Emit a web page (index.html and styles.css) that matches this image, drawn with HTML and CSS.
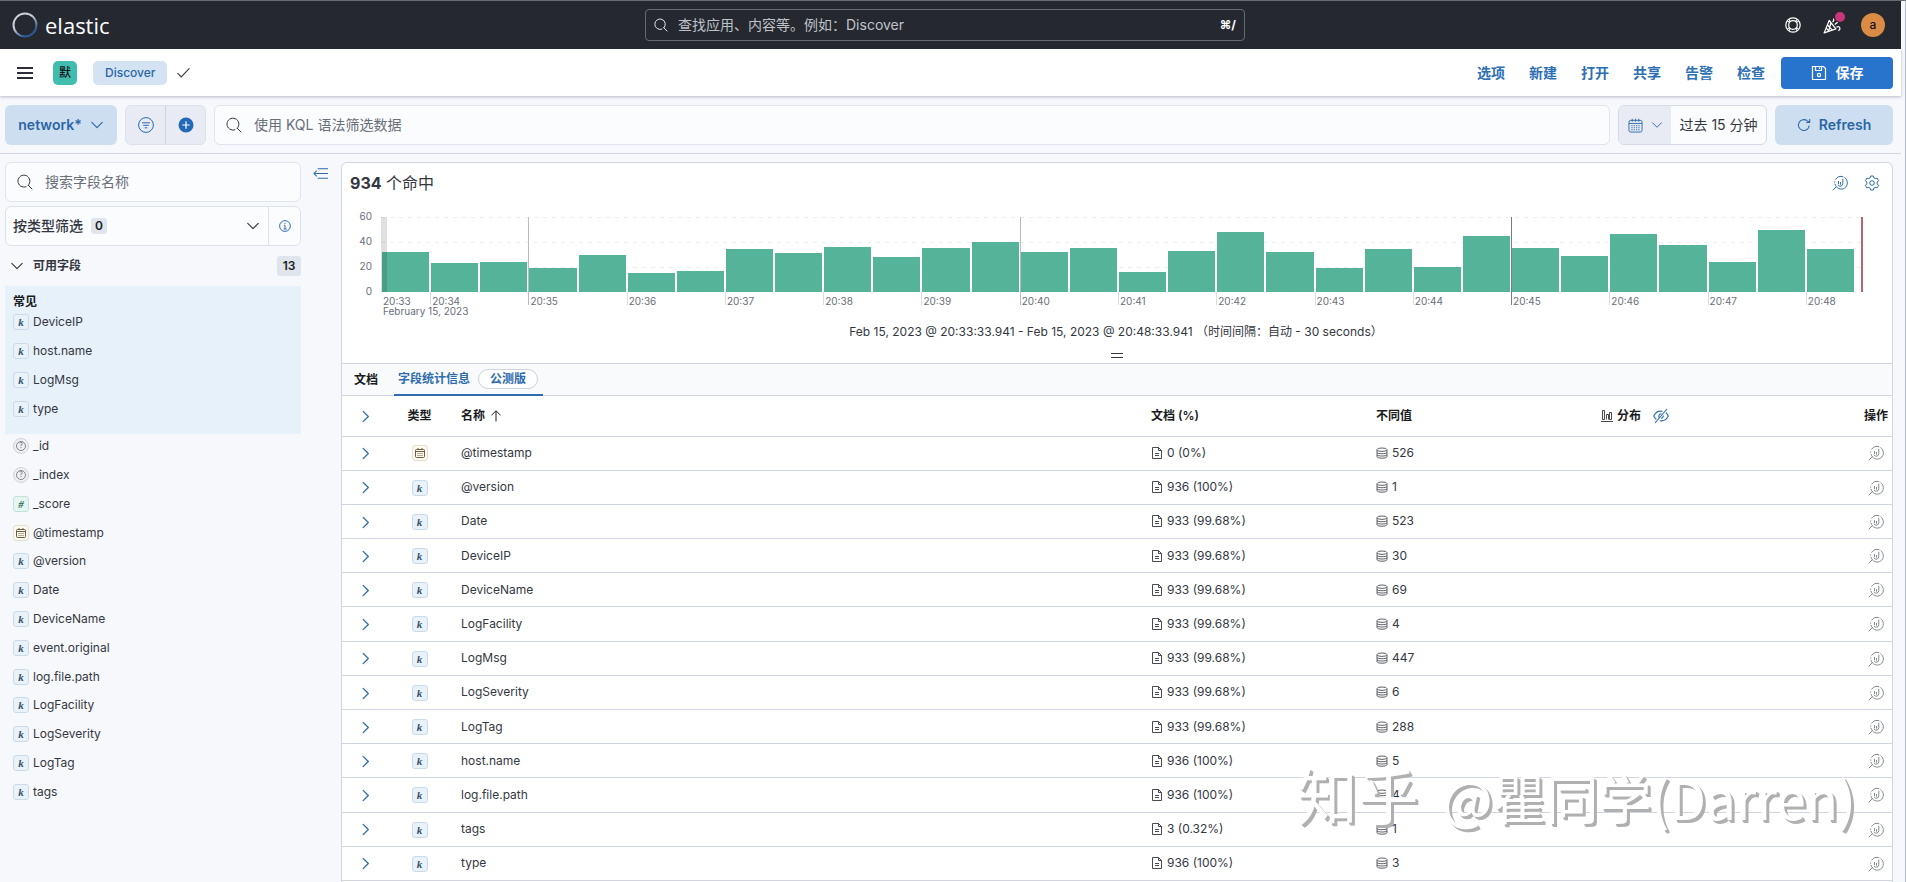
FILE: index.html
```html
<!DOCTYPE html>
<html lang="zh-CN">
<head>
<meta charset="utf-8">
<title>Discover - Elastic</title>
<link rel="stylesheet" href="styles.css">
</head>
<body>
<svg class="sprite" aria-hidden="true">
  <symbol id="search" viewBox="0 0 16 16"><path d="M11.3 11.3A6 6 0 1 0 9 12.8M11.2 11.2L15 15" fill="none" stroke="currentColor" stroke-linecap="round"/></symbol>
  <symbol id="down" viewBox="0 0 16 16"><path d="M2 5l6 6 6-6" fill="none" stroke="currentColor" stroke-width="1.300" stroke-linecap="round" stroke-linejoin="round"/></symbol>
  <symbol id="right" viewBox="0 0 16 16"><path d="M5.500 2.500L11 8l-5.500 5.500" fill="none" stroke="currentColor" stroke-width="1.400" stroke-linecap="round" stroke-linejoin="round"/></symbol>
  <symbol id="check" viewBox="0 0 16 16"><path d="M2 8.500L6 12.500 15 3" fill="none" stroke="currentColor" stroke-width="1.200" stroke-linecap="round"/></symbol>
  <symbol id="calendar" viewBox="0 0 16 16"><g fill="none" stroke="currentColor"><rect x="1" y="2.500" width="14" height="12.500" rx="2"/><path d="M1 5.800h14M4.500 .8v3.200M8 .8v3.200M11.500 .8v3.200"/><path d="M3.500 8.200h9.500M3.500 10.400h9.500M3.500 12.600h9.500" stroke-dasharray="1.400 1.100"/></g></symbol>
  <symbol id="calendar-small" viewBox="0 0 10 10"><g fill="none" stroke="currentColor"><rect x=".5" y="1.500" width="9" height="8" rx="1"/><path d="M0 3.500h10M3 0v2M7 0v2"/><path d="M2.500 5.500h5M2.500 7.500h5" stroke-dasharray="1 1"/></g></symbol>
  <symbol id="lens" viewBox="0 0 16 16"><g fill="none" stroke="currentColor" stroke-linecap="round"><path d="M3.700 4.200A6.300 6.300 0 0 1 11 1.700M12.800 2.700A6.300 6.300 0 1 1 3 9.200M2.700 7.300V6.800M4.400 11.600L1 15"/><path d="M6.500 6.500v2.200M8.500 7.500v1.800M10.800 4.200v4.300A2.600 2.600 0 0 1 6 10"/></g></symbol>
  <symbol id="doc" viewBox="0 0 12 12"><path d="M1.500 .5h6l3 3v8h-9zM7.500 .5v3h3M4 6.500h4M4 8.500h4" fill="none" stroke="currentColor" stroke-width=".9"/></symbol>
  <symbol id="database" viewBox="0 0 12 12"><g fill="none" stroke="currentColor" stroke-width=".8"><path d="M1 3V9.500c0 1 2 1.700 5 1.700s5-.7 5-1.700V3M1 5.500c.5.900 2.500 1.200 5 1.200s4.500-.3 5-1.200M1 7.800c.5.900 2.500 1.200 5 1.200s4.500-.3 5-1.200"/><ellipse cx="6" cy="2.700" rx="5" ry="1.700"/></g></symbol>
</svg>

<header class="topbar">
  <a class="brand" href="#">
    <svg class="brand-ring" viewBox="0 0 26 26" aria-hidden="true"><defs><linearGradient id="ring" x1="0" y1="0" x2=".7" y2="1"><stop offset=".45" stop-color="#c9ced8"/><stop offset=".9" stop-color="#2b5c99"/></linearGradient></defs><circle cx="13" cy="13" r="11.500" fill="none" stroke="url(#ring)" stroke-width="2"/></svg>
    <span>elastic</span>
  </a>
  <label class="global-search">
    <svg class="i14"><use href="#search"/></svg>
    <input type="search" aria-label="全局搜索" placeholder="查找应用、内容等。例如：Discover">
    <kbd>⌘/</kbd>
  </label>
  <div class="top-actions">
    <button class="plain" aria-label="帮助"><svg class="i16" viewBox="0 0 16 16"><g fill="none" stroke="currentColor" stroke-width="1.200"><circle cx="8" cy="8" r="7.200"/><circle cx="8" cy="8" r="4.300"/><path d="M2.500 4.200L5 5.500M4.200 2.500L5.500 5M13.500 4.200L11 5.500M11.800 2.500L10.500 5M2.500 11.800L5 10.500M4.200 13.500L5.500 11M13.500 11.800L11 10.500M11.800 13.500L10.500 11"/></g></svg></button>
    <button class="plain news" aria-label="新闻"><svg class="i18" viewBox="0 0 16 16"><g fill="none" stroke="currentColor" stroke-width="1.100" stroke-linejoin="round"><path d="M5.500 4L1 15l10.500-3.500zM4 8l4.500 4.800M7 6l-2 7.500M3 11l2.500 2.500M9 2.500c1 1 .5 2-.5 2.800M12 10c1.500-1 3-.5 3 1.200s-1 1.500-1.500 1.500M10.500 7.500L13 5.500"/></g></svg><span class="news-dot"></span></button>
    <button class="avatar" aria-label="账户">a</button>
  </div>
</header>

<nav class="appbar">
  <button class="plain dark" aria-label="菜单"><svg class="i16" viewBox="0 0 16 16"><path d="M0 3h16M0 8h16M0 13h16" stroke="currentColor" stroke-width="2"/></svg></button>
  <button class="space">默</button>
  <a class="crumb" href="#">Discover</a>
  <svg class="i14 crumb-check"><use href="#check"/></svg>
  <div class="app-links">
    <a href="#">选项</a><a href="#">新建</a><a href="#">打开</a><a href="#">共享</a><a href="#">告警</a><a href="#">检查</a>
    <button class="save"><svg class="i16" viewBox="0 0 16 16"><path d="M1.500 1.500h11l2 2v11h-13zM4.500 1.500v4h6v-4M8.500 2.500v1.500" fill="none" stroke="currentColor" stroke-width="1.200"/><circle cx="8" cy="10" r="1.600" fill="none" stroke="currentColor" stroke-width="1.200"/></svg>保存</button>
  </div>
</nav>

<section class="querybar">
  <button class="dataview">network*<svg class="i14"><use href="#down"/></svg></button>
  <div class="filter-group">
    <button aria-label="已保存的筛选"><svg class="i16" viewBox="0 0 16 16"><g fill="none" stroke="currentColor"><circle cx="8" cy="8" r="7.400"/><path d="M4 5.800h8M5.200 8.300h5.600M6.700 10.800h2.600"/></g></svg></button>
    <button aria-label="添加筛选"><svg class="i16" viewBox="0 0 16 16"><circle cx="8" cy="8" r="7.500" fill="#2469b8"/><path d="M8 4.300v7.400M4.300 8h7.400" stroke="#fff" stroke-width="1.200"/></svg></button>
  </div>
  <label class="kql"><svg class="i16"><use href="#search"/></svg><input type="text" aria-label="查询" placeholder="使用 KQL 语法筛选数据"></label>
  <div class="date-group">
    <button class="date-quick" aria-label="快速选择日期"><svg class="i15"><use href="#calendar"/></svg><svg class="i12"><use href="#down"/></svg></button>
    <button class="date-range">过去 15 分钟</button>
  </div>
  <button class="refresh"><svg class="i14" viewBox="0 0 16 16"><path d="M14 8.500A6.200 6.200 0 1 1 11.800 3.300L14.200 5M14.500 1v4.200h-4" fill="none" stroke="currentColor" stroke-width="1.200"/></svg>Refresh</button>
</section>

<main class="page">
  <aside class="sidebar">
    <label class="field-search"><svg class="i16"><use href="#search"/></svg><input type="search" aria-label="字段" placeholder="搜索字段名称"></label>
    <div class="type-filter">
      <button class="type-main">按类型筛选<span class="badge">0</span><svg class="i14"><use href="#down"/></svg></button>
      <button class="type-info" aria-label="字段类型说明"><svg class="i12" viewBox="0 0 16 16"><g fill="none" stroke="currentColor" stroke-width="1.300"><circle cx="8" cy="8" r="7.200"/><path d="M6.500 7H8v5M6 12h4.500M8 3.500v1.700"/></g></svg></button>
    </div>
    <button class="available"><svg class="i14"><use href="#down"/></svg>可用字段<span class="badge big">13</span></button>
    <section class="popular">
      <h2>常见</h2>
      <ul class="fields popular-fields">
        <li><span class="tok">k</span>DeviceIP</li>
        <li><span class="tok">k</span>host.name</li>
        <li><span class="tok">k</span>LogMsg</li>
        <li><span class="tok">k</span>type</li>
      </ul>
    </section>
    <ul class="fields all-fields">
      <li><span class="tok unknown"><i>?</i></span>_id</li>
      <li><span class="tok unknown"><i>?</i></span>_index</li>
      <li><span class="tok num">#</span>_score</li>
      <li><span class="tok date"><svg class="i10"><use href="#calendar-small"/></svg></span>@timestamp</li>
      <li><span class="tok">k</span>@version</li>
      <li><span class="tok">k</span>Date</li>
      <li><span class="tok">k</span>DeviceName</li>
      <li><span class="tok">k</span>event.original</li>
      <li><span class="tok">k</span>log.file.path</li>
      <li><span class="tok">k</span>LogFacility</li>
      <li><span class="tok">k</span>LogSeverity</li>
      <li><span class="tok">k</span>LogTag</li>
      <li><span class="tok">k</span>tags</li>
    </ul>
  </aside>
  <button class="plain blue collapse" aria-label="折叠侧边栏"><svg class="i15" viewBox="0 0 16 16"><path d="M5 3h11M1 8h15M5 13h11M4 5L1 8l3 3" fill="none" stroke="currentColor" stroke-width="1.100"/></svg></button>

  <section class="panel">
    <div class="hits">
      <h1><strong>934</strong> 个命中</h1>
      <button class="plain blue" aria-label="在 Lens 中编辑"><svg class="i16"><use href="#lens"/></svg></button>
      <button class="plain blue" aria-label="图表选项"><svg class="i16" viewBox="0 0 16 16"><path d="M6.600 1h2.800l.5 1.900 1.300.7 1.900-.5 1.500 2.500-1.400 1.400v1.900l1.400 1.500-1.500 2.500-1.900-.6-1.300.8-.5 1.900H6.600l-.5-1.900-1.300-.8-1.900.6-1.500-2.500 1.400-1.500V7L1.400 5.600l1.500-2.500 1.900.5 1.300-.7z" fill="none" stroke="currentColor" stroke-linejoin="round"/><circle cx="8" cy="8" r="2.300" fill="none" stroke="currentColor"/></svg></button>
    </div>
    <div class="chart">
      <div class="y-axis"><span>60</span><span>40</span><span>20</span><span>0</span></div>
      <div class="plot">
        <div class="bars">
          <b style="height:53.3%"></b><b style="height:38.3%"></b><b style="height:40%"></b><b style="height:31.7%"></b><b style="height:50%"></b><b style="height:25%"></b><b style="height:28.3%"></b><b style="height:56.7%"></b><b style="height:51.7%"></b><b style="height:60%"></b><b style="height:46.7%"></b><b style="height:58.3%"></b><b style="height:66.7%"></b><b style="height:53.3%"></b><b style="height:58.3%"></b><b style="height:26.7%"></b><b style="height:55%"></b><b style="height:80%"></b><b style="height:53.3%"></b><b style="height:31.7%"></b><b style="height:56.7%"></b><b style="height:33.3%"></b><b style="height:75%"></b><b style="height:58.3%"></b><b style="height:48.3%"></b><b style="height:76.7%"></b><b style="height:63.3%"></b><b style="height:40%"></b><b style="height:83.3%"></b><b style="height:56.7%"></b>
        </div>
        <div class="x-axis">
          <span class="first">20:33<br>February 15, 2023</span><span>20:34</span><span class="major">20:35</span><span>20:36</span><span>20:37</span><span>20:38</span><span>20:39</span><span class="major">20:40</span><span>20:41</span><span>20:42</span><span>20:43</span><span>20:44</span><span class="major strong">20:45</span><span>20:46</span><span>20:47</span><span class="last">20:48</span>
        </div>
      </div>
    </div>
    <p class="caption">Feb 15, 2023 @ 20:33:33.941 - Feb 15, 2023 @ 20:48:33.941 （时间间隔：自动 - 30 seconds）</p>
    <button class="resizer" aria-label="调整大小"></button>
    <div class="tabs" role="tablist">
      <button role="tab" aria-selected="false">文档</button>
      <button role="tab" aria-selected="true" class="active">字段统计信息<span class="beta">公测版</span></button>
    </div>
    <table class="stats">
      <colgroup><col class="c-open"><col class="c-type"><col class="c-name"><col class="c-docs"><col class="c-distinct"><col class="c-dist"><col class="c-act"></colgroup>
      <thead><tr>
        <th><button class="plain blue" aria-label="全部展开"><svg class="i15"><use href="#right"/></svg></button></th>
        <th class="mid">类型</th>
        <th>名称 <svg class="i12 sort" viewBox="0 0 12 12"><path d="M6 11.500V1M1.500 5.200L6 .8l4.500 4.400" fill="none" stroke="currentColor"/></svg></th>
        <th>文档 (%)</th>
        <th>不同值</th>
        <th><div class="dist"><svg class="i12" viewBox="0 0 12 12"><path d="M0 11.500h12M1.500 9.500v-9h2v9zM5.500 9.500v-5h2v5M8.500 9.500v-7h2v7z" fill="none" stroke="currentColor" stroke-width=".8"/></svg>分布<button class="plain blue" aria-label="隐藏分布"><svg class="i16" viewBox="0 0 16 16"><g fill="none" stroke="currentColor" stroke-width="1.100"><path d="M9.500 3.300C5.500 2.500 2.300 4.700.7 8c.7 1.400 1.600 2.500 2.700 3.300M12.800 4.800C13.900 5.600 14.700 6.700 15.300 8c-1.600 3.300-4.800 5.300-8.500 4.700M14 1L2 15M6 9.500C5.300 7.500 6.500 5.700 8.500 5.700M10.300 7.500c.2 1.500-.8 2.700-2.300 2.800"/></g></svg></button></div></th>
        <th class="end">操作</th>
      </tr></thead>
      <tbody>
        <tr><td><button class="plain blue" aria-label="展开"><svg class="i15"><use href="#right"/></svg></button></td><td class="mid"><span class="tok date"><svg class="i10"><use href="#calendar-small"/></svg></span></td><td>@timestamp</td><td><svg class="i12"><use href="#doc"/></svg>0 (0%)</td><td><svg class="i12"><use href="#database"/></svg>526</td><td></td><td class="end"><button class="plain grey" aria-label="浏览"><svg class="i16"><use href="#lens"/></svg></button></td></tr>
        <tr><td><button class="plain blue" aria-label="展开"><svg class="i15"><use href="#right"/></svg></button></td><td class="mid"><span class="tok">k</span></td><td>@version</td><td><svg class="i12"><use href="#doc"/></svg>936 (100%)</td><td><svg class="i12"><use href="#database"/></svg>1</td><td></td><td class="end"><button class="plain grey" aria-label="浏览"><svg class="i16"><use href="#lens"/></svg></button></td></tr>
        <tr><td><button class="plain blue" aria-label="展开"><svg class="i15"><use href="#right"/></svg></button></td><td class="mid"><span class="tok">k</span></td><td>Date</td><td><svg class="i12"><use href="#doc"/></svg>933 (99.68%)</td><td><svg class="i12"><use href="#database"/></svg>523</td><td></td><td class="end"><button class="plain grey" aria-label="浏览"><svg class="i16"><use href="#lens"/></svg></button></td></tr>
        <tr><td><button class="plain blue" aria-label="展开"><svg class="i15"><use href="#right"/></svg></button></td><td class="mid"><span class="tok">k</span></td><td>DeviceIP</td><td><svg class="i12"><use href="#doc"/></svg>933 (99.68%)</td><td><svg class="i12"><use href="#database"/></svg>30</td><td></td><td class="end"><button class="plain grey" aria-label="浏览"><svg class="i16"><use href="#lens"/></svg></button></td></tr>
        <tr><td><button class="plain blue" aria-label="展开"><svg class="i15"><use href="#right"/></svg></button></td><td class="mid"><span class="tok">k</span></td><td>DeviceName</td><td><svg class="i12"><use href="#doc"/></svg>933 (99.68%)</td><td><svg class="i12"><use href="#database"/></svg>69</td><td></td><td class="end"><button class="plain grey" aria-label="浏览"><svg class="i16"><use href="#lens"/></svg></button></td></tr>
        <tr><td><button class="plain blue" aria-label="展开"><svg class="i15"><use href="#right"/></svg></button></td><td class="mid"><span class="tok">k</span></td><td>LogFacility</td><td><svg class="i12"><use href="#doc"/></svg>933 (99.68%)</td><td><svg class="i12"><use href="#database"/></svg>4</td><td></td><td class="end"><button class="plain grey" aria-label="浏览"><svg class="i16"><use href="#lens"/></svg></button></td></tr>
        <tr><td><button class="plain blue" aria-label="展开"><svg class="i15"><use href="#right"/></svg></button></td><td class="mid"><span class="tok">k</span></td><td>LogMsg</td><td><svg class="i12"><use href="#doc"/></svg>933 (99.68%)</td><td><svg class="i12"><use href="#database"/></svg>447</td><td></td><td class="end"><button class="plain grey" aria-label="浏览"><svg class="i16"><use href="#lens"/></svg></button></td></tr>
        <tr><td><button class="plain blue" aria-label="展开"><svg class="i15"><use href="#right"/></svg></button></td><td class="mid"><span class="tok">k</span></td><td>LogSeverity</td><td><svg class="i12"><use href="#doc"/></svg>933 (99.68%)</td><td><svg class="i12"><use href="#database"/></svg>6</td><td></td><td class="end"><button class="plain grey" aria-label="浏览"><svg class="i16"><use href="#lens"/></svg></button></td></tr>
        <tr><td><button class="plain blue" aria-label="展开"><svg class="i15"><use href="#right"/></svg></button></td><td class="mid"><span class="tok">k</span></td><td>LogTag</td><td><svg class="i12"><use href="#doc"/></svg>933 (99.68%)</td><td><svg class="i12"><use href="#database"/></svg>288</td><td></td><td class="end"><button class="plain grey" aria-label="浏览"><svg class="i16"><use href="#lens"/></svg></button></td></tr>
        <tr><td><button class="plain blue" aria-label="展开"><svg class="i15"><use href="#right"/></svg></button></td><td class="mid"><span class="tok">k</span></td><td>host.name</td><td><svg class="i12"><use href="#doc"/></svg>936 (100%)</td><td><svg class="i12"><use href="#database"/></svg>5</td><td></td><td class="end"><button class="plain grey" aria-label="浏览"><svg class="i16"><use href="#lens"/></svg></button></td></tr>
        <tr><td><button class="plain blue" aria-label="展开"><svg class="i15"><use href="#right"/></svg></button></td><td class="mid"><span class="tok">k</span></td><td>log.file.path</td><td><svg class="i12"><use href="#doc"/></svg>936 (100%)</td><td><svg class="i12"><use href="#database"/></svg>4</td><td></td><td class="end"><button class="plain grey" aria-label="浏览"><svg class="i16"><use href="#lens"/></svg></button></td></tr>
        <tr><td><button class="plain blue" aria-label="展开"><svg class="i15"><use href="#right"/></svg></button></td><td class="mid"><span class="tok">k</span></td><td>tags</td><td><svg class="i12"><use href="#doc"/></svg>3 (0.32%)</td><td><svg class="i12"><use href="#database"/></svg>1</td><td></td><td class="end"><button class="plain grey" aria-label="浏览"><svg class="i16"><use href="#lens"/></svg></button></td></tr>
        <tr><td><button class="plain blue" aria-label="展开"><svg class="i15"><use href="#right"/></svg></button></td><td class="mid"><span class="tok">k</span></td><td>type</td><td><svg class="i12"><use href="#doc"/></svg>936 (100%)</td><td><svg class="i12"><use href="#database"/></svg>3</td><td></td><td class="end"><button class="plain grey" aria-label="浏览"><svg class="i16"><use href="#lens"/></svg></button></td></tr>
      </tbody>
    </table>
  </section>
</main>
<div class="watermark"><span>知乎</span> @瞿同学(Darren)</div>
</body>
</html>
```
FILE: styles.css
```css
*, *::before, *::after { box-sizing: border-box; }
html { background: #f7f8fc; }
body {
  margin: 0;
  padding-right: 4px;
  border-right: 1px solid #b4b9c9;
  border-top: 1px solid #666b74;
  display: flex;
  flex-direction: column;
  font: 12px/16px Inter, "Noto Sans CJK SC", sans-serif;
  color: #343741;
  background: #f7f8fc;
  overflow: hidden;
  height: 100vh;
}
button, input { font: inherit; color: inherit; margin: 0; }
button { background: none; border: 0; padding: 0; }
a { text-decoration: none; color: inherit; }
ul, h1, h2, p { margin: 0; padding: 0; list-style: none; font-weight: 400; }
svg { flex: none; display: block; }
.sprite { display: none; }
.i10 { width: 10px; height: 10px; }
.i12 { width: 12px; height: 12px; }
.i14 { width: 14px; height: 14px; }
.i15 { width: 15px; height: 15px; }
.i16 { width: 16px; height: 16px; }
.i18 { width: 18px; height: 18px; }
.plain { display: inline-flex; align-items: center; justify-content: center; }
.blue { color: #2e6cad; }
.grey { color: #85898f; }
.dark { color: #2b2e38; }

/* top bar */
.topbar {
  display: grid;
  grid-template-columns: 1fr 600px 1fr;
  align-items: center;
  height: 48px;
  padding: 0 16px 0 5px;
  background: #25282f;
  color: #fff;
}
.brand { display: flex; align-items: center; gap: 7px; padding-left: 7px; font: 22px/26px "Open Sans", sans-serif; }
.brand-ring { width: 26px; height: 26px; }
.global-search {
  display: flex;
  align-items: center;
  gap: 10px;
  height: 32px;
  padding: 0 8px;
  border: 1px solid #666a73;
  border-radius: 4px;
}
input { flex: 1; min-width: 0; border: 0; outline: 0; padding: 0; background: none; }
.global-search input { font-size: 14px; }
.global-search input::placeholder { color: #bfc2c9; opacity: 1; }
kbd { font: 700 12px/16px Inter, "DejaVu Sans", sans-serif; }
.top-actions { display: flex; align-items: center; justify-content: flex-end; gap: 22px; }
.top-actions .avatar {
  width: 24px; height: 24px; margin-left: -2px;
  border-radius: 50%;
  background: #da8b45;
  color: #111;
  font-weight: 500;
}
.news { position: relative; }
.news-dot { position: absolute; top: -4px; right: -4px; width: 10px; height: 10px; border-radius: 50%; background: #c9357a; }

/* application bar */
.appbar {
  display: flex;
  align-items: center;
  height: 47px;
  padding: 0 8px 0 17px;
  background: #fff;
  box-shadow: 0 1px 3px rgba(60, 70, 100, .35);
  position: relative;
}
.space {
  width: 24px; height: 24px; margin-left: 20px;
  border-radius: 5px;
  background: #41bdb0;
  color: #111;
  font-weight: 500;
}
.crumb {
  margin-left: 16px;
  padding: 4px 12px;
  border-radius: 5px;
  background: #d3e3f3;
  color: #2a66a5;
  font-weight: 500;
}
.crumb-check { margin-left: 9px; }
.app-links { margin-left: auto; display: flex; align-items: center; gap: 24px; font-size: 14px; font-weight: 600; color: #2d6fb5; }
.save {
  display: flex; align-items: center; justify-content: center; gap: 9px;
  width: 112px; height: 32px; margin-left: -8px;
  border-radius: 4px;
  background: #2873cb;
  color: #fff;
}

/* query bar */
.querybar {
  display: flex;
  gap: 8px;
  padding: 9px 8px 8px 5px;
  border-bottom: 1px solid #d0d5df;
  background: #f7f8fc;
  font-size: 14px;
}
.querybar > * { height: 40px; }
.dataview {
  display: flex; align-items: center; justify-content: center; gap: 8px;
  width: 112px;
  border-radius: 6px;
  background: #cddef0;
  color: #2a66a5;
  font-weight: 600;
}
.filter-group { display: flex; width: 81px; border: 1px solid #dde1ea; border-radius: 6px; background: #e8ebf3; color: #2469b8; }
.filter-group button { flex: 1; display: flex; align-items: center; justify-content: center; }
.filter-group button + button { border-left: 1px solid #cdd2dd; }
.kql, .field-search {
  display: flex; align-items: center; gap: 12px;
  padding: 0 11px;
  border: 1px solid #e0e4ec;
  border-radius: 6px;
  background: #fbfcfe;
  font-size: 14px;
}
.kql { flex: 1; }
.kql input::placeholder, .field-search input::placeholder { color: #6a6f7a; opacity: 1; }
.date-group { display: flex; width: 149px; border: 1px solid #d5dae4; border-radius: 6px; overflow: hidden; background: #fbfcfe; }
.date-quick { display: flex; align-items: center; justify-content: center; gap: 8px; width: 52px; background: #e8ebf3; color: #2e6cad; }
.date-range { flex: 1; white-space: nowrap; }
.refresh {
  display: flex; align-items: center; justify-content: center; gap: 8px;
  width: 118px;
  border-radius: 6px;
  background: #cddef0;
  color: #2a66a5;
  font-weight: 600;
}

/* layout */
.page { flex: 1; display: flex; align-items: stretch; padding: 8px 8px 0 5px; min-height: 0; }
.sidebar { width: 296px; }
.collapse { align-self: flex-start; margin: 4px 13px 0 12px; width: 15px; }

/* sidebar */
.field-search { height: 40px; }
.type-filter { display: flex; height: 40px; margin-top: 4px; border: 1px solid #dde1ea; border-radius: 6px; background: #fbfcfe; }
.type-main { flex: 1; display: flex; align-items: center; gap: 8px; padding: 0 8px 0 7px; font-size: 14px; font-weight: 500; }
.type-main svg { margin-left: auto; }
.type-info { width: 32px; display: flex; align-items: center; justify-content: center; border-left: 1px solid #dde1ea; color: #2e6cad; }
.badge { min-width: 16px; padding: 0 4px; border-radius: 3px; background: #e0e4ec; font-size: 12px; font-weight: 600; text-align: center; color: #1a1c21; }
.badge.big { min-width: 24px; margin-left: auto; padding: 2px 4px; }
.available { display: flex; align-items: center; gap: 9px; width: 100%; height: 40px; padding-left: 5px; font-weight: 600; }
.popular { padding: 8px; background: #e6f1fa; }
.popular h2 { font-size: 12px; font-weight: 700; color: #1a1c21; }
.fields { display: grid; }
.fields li { display: flex; align-items: center; gap: 4px; }
.popular-fields { grid-auto-rows: 29px; }
.popular-fields li { align-self: start; padding-top: 4px; }
.all-fields { padding: 0 8px; grid-auto-rows: 1fr; height: 374px; margin-top: -2px; }
.tok {
  display: inline-flex; align-items: center; justify-content: center;
  width: 16px; height: 16px;
  border: 1px solid #c9dbea;
  border-radius: 3px;
  background: #eaf2f9;
  color: #31506f;
  font: italic 700 11px/14px "Liberation Serif", serif;
}
.tok.num { border-color: #bfe3d9; background: #e6f5f1; color: #2f6b57; }
.tok.date { border-color: #e6dfcc; background: #fbf8f0; color: #6b5f3c; }
.tok.unknown { border-color: #d0d3d9; border-radius: 50%; background: #eff0f3; color: #696f7a; }
.tok.unknown i { width: 10px; height: 10px; border: 1px solid #80858f; border-radius: 50%; font: 7px/8px Inter, sans-serif; text-align: center; }

/* results panel */
.panel { flex: 1; min-width: 0; border: 1px solid #d0d5df; border-bottom: 0; border-radius: 6px 6px 0 0; background: #fff; display: flex; flex-direction: column; }
.hits { display: flex; align-items: center; gap: 16px; padding: 8px 12px 0 8px; }
.hits h1 { margin-right: auto; font-size: 16px; line-height: 24px; }
.hits strong { font-weight: 700; }
.chart { display: flex; gap: 9px; padding: 22px 29px 0 13px; color: #6a6f7a; font-size: 10px; line-height: 10px; }
.y-axis { display: flex; flex-direction: column; justify-content: space-between; width: 17px; height: 85px; margin-top: -6px; text-align: right; }
.plot { flex: 1; min-width: 0; }
.bars {
  position: relative;
  display: grid; grid-template-columns: repeat(30, minmax(0, 1fr)); align-items: end;
  height: 75px;
  padding-right: 6px;
  border-right: 2px solid #b86570;
  background: repeating-linear-gradient(90deg, #eceef2 0 4px, transparent 4px 9px) 0 0 / 100% 1px no-repeat, repeating-linear-gradient(90deg, #eceef2 0 4px, transparent 4px 9px) 0 25px / 100% 1px no-repeat, repeating-linear-gradient(90deg, #eceef2 0 4px, transparent 4px 9px) 0 50px / 100% 1px no-repeat;
}
.bars b { margin: 0 1px; background: #54b399; }
.bars::after { content: ""; position: absolute; left: 0; top: 0; bottom: 0; width: 6px; background: rgba(0, 0, 0, .12); }
.x-axis { display: grid; grid-template-columns: repeat(30, minmax(0, 1fr)); height: 38px; padding-right: 8px; }
.x-axis span { position: relative; grid-column: span 2; height: 13px; padding: 4px 0 0 1px; border-left: 1px solid #d9dce2; white-space: nowrap; }
.x-axis .first { grid-column: span 1; border-color: transparent; }
.x-axis .last { grid-column: span 1; }
.x-axis .major { border-color: #b9bcc2; }
.x-axis .major::before { content: ""; position: absolute; left: -1px; bottom: 13px; height: 75px; width: 1px; background: #b9bcc2; }
.x-axis .strong { border-color: #777b83; }
.x-axis .strong::before { background: #777b83; }
.caption { text-align: center; margin-top: -6px; padding-right: 2px; }
.resizer { align-self: center; width: 12px; height: 5px; margin: 13px 0 5px; border: solid #343741; border-width: 1px 0; }
.tabs { display: flex; gap: 16px; height: 33px; padding-left: 12px; border: solid #d0d5df; border-width: 1px 0; background: #f9fafc; font-weight: 600; color: #1a1c21; }
.tabs .active { display: flex; align-items: center; gap: 8px; height: 32px; padding: 0 5px 0 4px; border-bottom: 2px solid #2e6cad; color: #2e6cad; }
.beta { padding: 1px 11px; border: 1px solid #ccd4e0; border-radius: 10px; background: #fff; }

/* field statistics */
.stats { width: 100%; border-collapse: collapse; table-layout: fixed; height: 485px; }
.c-open { width: 48px; } .c-type { width: 71px; } .c-docs { width: 225px; } .c-distinct { width: 225px; } .c-dist { width: 225px; } .c-act { width: 66px; }
.stats th, .stats td { padding: 0; text-align: left; border-bottom: 1px solid #d0d5df; }
.stats th { height: 40px; font-weight: 600; color: #1a1c21; }
.stats th:first-child, .stats td:first-child { padding-left: 16px; }
.stats th.mid, .stats td.mid { padding: 0 26px 0 14px; text-align: center; }
.stats th.end { text-align: right; padding-right: 4px; }
.stats td.end { text-align: right; padding-right: 8px; }
.stats td .plain, .stats th .plain, .stats td .tok { vertical-align: middle; }
.stats td > svg { display: inline-block; vertical-align: -2px; margin-right: 4px; }
.sort { display: inline-block; vertical-align: -2px; margin-left: 2px; }
.dist { display: flex; align-items: center; gap: 4px; }
.dist .plain { margin-left: 8px; }

.watermark {
  position: fixed; right: 50px; bottom: 49px;
  font: 53px/72px "Noto Sans CJK SC", sans-serif;
  color: #fff;
  text-shadow: 2px 2px 0 #b0b0b0, 3px 3px 0 #b0b0b0;
  white-space: nowrap;
  pointer-events: none;
}
.watermark span { margin-right: 12px; font-size: 61px; }
```
